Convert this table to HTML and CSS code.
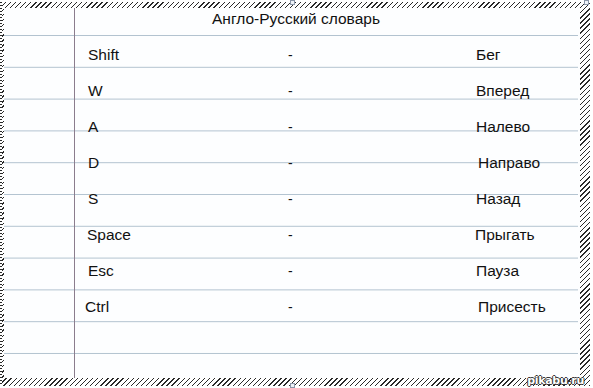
FILE: index.html
```html
<!DOCTYPE html>
<html lang="ru">
<head>
<meta charset="utf-8">
<title>Англо-Русский словарь</title>
<link rel="stylesheet" href="styles.css">
</head>
<body>
<div class="frame">
  <div class="sheet">
    <h1 class="title">Англо-Русский словарь</h1>
    <div class="dict">
      <div class="row"><span>Shift</span><span class="dash">-</span><span>Бег</span></div>
      <div class="row"><span>W</span><span class="dash">-</span><span>Вперед</span></div>
      <div class="row"><span>A</span><span class="dash">-</span><span>Налево</span></div>
      <div class="row"><span>D</span><span class="dash">-</span><span class="nudge-r">Направо</span></div>
      <div class="row"><span>S</span><span class="dash">-</span><span>Назад</span></div>
      <div class="row"><span class="nudge-l">Space</span><span class="dash">-</span><span class="nudge-l">Прыгать</span></div>
      <div class="row"><span>Esc</span><span class="dash">-</span><span>Пауза</span></div>
      <div class="row"><span class="nudge-ll">Ctrl</span><span class="dash">-</span><span class="nudge-r">Присесть</span></div>
    </div>
  </div>
  <span class="handle handle-top"></span>
  <span class="handle handle-corner"></span>
  <span class="handle handle-bottom"></span>
  <span class="watermark">pikabu.ru</span>
</div>
</body>
</html>
```
FILE: styles.css
```css
html, body {
  margin: 0;
  padding: 0;
  background: #ffffff;
}
body {
  width: 593px;
  height: 388px;
  overflow: hidden;
  font-family: "Liberation Sans", Arial, sans-serif;
  color: #111111;
}
.frame {
  position: relative;
  box-sizing: border-box;
  width: 590px;
  height: 384px;
  margin-top: 2px;
  padding: 6px 10px 8px 4px;
  background:
    repeating-linear-gradient(to bottom, #2a2a2a 0 1px, #ffffff 1px 3px) 0 0 / 2px 100% no-repeat,
    repeating-linear-gradient(135deg, #2a2a2a 0 1px, #ffffff 1px 3.6px);
}
.sheet {
  box-sizing: border-box;
  height: 100%;
  background-color: #fdfeff;
  background-image:
    linear-gradient(to right, transparent 70px, #8b7d8d 70px, #8b7d8d 71px, transparent 71px),
    linear-gradient(to bottom, transparent 30.8px, #b3c3d0 30.8px);
  background-size: 100% 100%, 574px 31.8px;
  background-repeat: no-repeat, repeat-y;
  background-position: 0 0, 0 -3.8px;
}
.title {
  margin: 0;
  padding-left: 8px;
  font-size: 15.5px;
  font-weight: normal;
  line-height: 22px;
  text-align: center;
}
.dict {
  margin-top: 7px;
  padding-left: 84px;
}
.row {
  display: grid;
  grid-template-columns: 200px 188px 1fr;
  height: 36px;
  align-items: center;
  font-size: 15.5px;
  line-height: 18px;
}
.dash {
  font-size: 14px;
}
.nudge-l { margin-left: -1px; }
.nudge-ll { margin-left: -3px; }
.nudge-r { margin-left: 2px; }
.handle {
  position: absolute;
  width: 5px;
  height: 5px;
  border: 1px solid #8a96a8;
  background: #eef2f8;
  box-sizing: border-box;
}
.handle-top { left: 290px; top: -2px; }
.handle-corner { left: 584px; top: -2px; }
.handle-bottom { left: 290px; top: 381px; }
.watermark {
  position: absolute;
  right: 6px;
  bottom: -1px;
  font-family: "DejaVu Sans", sans-serif;
  font-size: 11px;
  font-weight: bold;
  color: #ffffff;
  letter-spacing: -0.3px;
  text-shadow: 1px 0 #333, -1px 0 #333, 0 1px #333, 0 -1px #333;
}
```
